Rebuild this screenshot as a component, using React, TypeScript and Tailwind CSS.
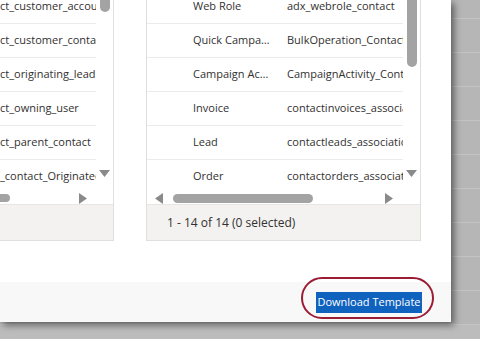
import { ReactNode } from "react";

const leftRows = [
    "ct_customer_accounts",
    "ct_customer_contacts",
    "ct_originating_lead",
    "ct_owning_user",
    "ct_parent_contact",
    "_contact_OriginatedFromLead",
];

const rightRows = [
    { entity: "Web Role", name: "adx_webrole_contact" },
    { entity: "Quick Campaign", name: "BulkOperation_Contacts" },
    { entity: "Campaign Activity", name: "CampaignActivity_Contacts" },
    { entity: "Invoice", name: "contactinvoices_association" },
    { entity: "Lead", name: "contactleads_association" },
    { entity: "Order", name: "contactorders_association" },
];

function DownArrow() {
    return (
        <svg width="11" height="8" viewBox="0 0 11 8">
            <polygon points="0,0 11,0 5.5,7" fill="#8a8a8a" />
        </svg>
    );
}

function SideArrow({ dir }: { dir: "left" | "right" }) {
    return (
        <svg width="8" height="11" viewBox="0 0 8 11">
            {dir === "right"
                ? <polygon points="0,0 8,5.5 0,11" fill="#8a8a8a" />
                : <polygon points="8,0 0,5.5 8,11" fill="#8a8a8a" />}
        </svg>
    );
}

function VScroll({ thumb }: { thumb: number }) {
    return (
        <div className="w-[17px] flex flex-col items-center bg-white">
            <div className="w-[10px] rounded-b-full bg-[#a3a3a3]" style={{ height: thumb }}></div>
            <div className="flex-1"></div>
            <div className="mb-[14px]"><DownArrow /></div>
        </div>
    );
}

function Row({ children }: { children: ReactNode }) {
    return (
        <div className="h-[34px] shrink-0 flex items-center border-b border-[#edebe9] whitespace-nowrap overflow-hidden">
            {children}
        </div>
    );
}

export default function App() {
    return (
        <div className="w-[480px] h-[339px] overflow-hidden bg-[#bcbcbc] font-['Open_Sans','Liberation_Sans',sans-serif] text-[#323130]">
            <div className="h-[325px] bg-[repeating-linear-gradient(to_bottom,#b6b6b6_0px,#b6b6b6_18px,#c4c4c4_18px,#c4c4c4_19px,#b6b6b6_19px,#b6b6b6_34px)]">
                <div className="w-[451px] h-[322px] bg-white flex flex-col shadow-[3px_3px_7px_rgba(0,0,0,0.5)]">

                    <div className="h-[241px] flex">
                        {/* related records, left grid */}
                        <div className="w-[114px] flex flex-col border-r border-b border-[#e1dfdd]">
                            <div className="h-[192px] flex">
                                <div className="flex-1 flex flex-col overflow-hidden -mt-[10px] text-[11px]">
                                    {leftRows.map(r => (
                                        <Row key={r}><span>{r}</span></Row>
                                    ))}
                                </div>
                                <VScroll thumb={12} />
                            </div>
                            <div className="h-[12px] flex items-center pr-[26px] bg-white">
                                <div className="w-[10px] h-[8px] rounded-r-full bg-[#a3a3a3]"></div>
                                <div className="flex-1"></div>
                                <SideArrow dir="right" />
                            </div>
                            <div className="flex-1 bg-[#f3f2f1] border-t border-[#e6e6e6]"></div>
                        </div>

                        {/* related records, right grid */}
                        <div className="w-[275px] ml-[32px] flex flex-col border-x border-b border-[#e1dfdd]">
                            <div className="h-[192px] flex">
                                <div className="flex-1 flex flex-col overflow-hidden -mt-[10px] text-[11px]">
                                    {rightRows.map(r => (
                                        <Row key={r.name}>
                                            <span className="w-[46px] shrink-0"></span>
                                            <span className="w-[94px] shrink-0 pr-[16px] overflow-hidden text-ellipsis">{r.entity}</span>
                                            <span>{r.name}</span>
                                        </Row>
                                    ))}
                                </div>
                                <VScroll thumb={67} />
                            </div>
                            <div className="h-[12px] flex items-center pl-[8px] pr-[27px] bg-white">
                                <SideArrow dir="left" />
                                <div className="ml-[10px] w-[140px] h-[9px] rounded-full bg-[#a3a3a3]"></div>
                                <div className="flex-1"></div>
                                <SideArrow dir="right" />
                            </div>
                            <div className="flex-1 bg-[#f3f2f1] border-t border-[#e6e6e6] flex items-center pl-[20px] text-[12px] font-medium">
                                1 - 14 of 14 (0 selected)
                            </div>
                        </div>
                    </div>

                    <div className="flex-1"></div>

                    <div className="h-[40px] bg-[#f8f8f8] flex items-center justify-end pr-[29px]">
                        <div className="relative">
                            <button className="h-[21px] w-[106px] bg-[#0f62be] text-white text-[11px] flex items-center justify-center">
                                Download Template
                            </button>
                            <div className="absolute -left-[15px] -right-[12px] -top-[15px] -bottom-[6px] rounded-[22px] border-2 border-[#9b1c35]"></div>
                        </div>
                    </div>
                </div>
            </div>
        </div>
    );
}
